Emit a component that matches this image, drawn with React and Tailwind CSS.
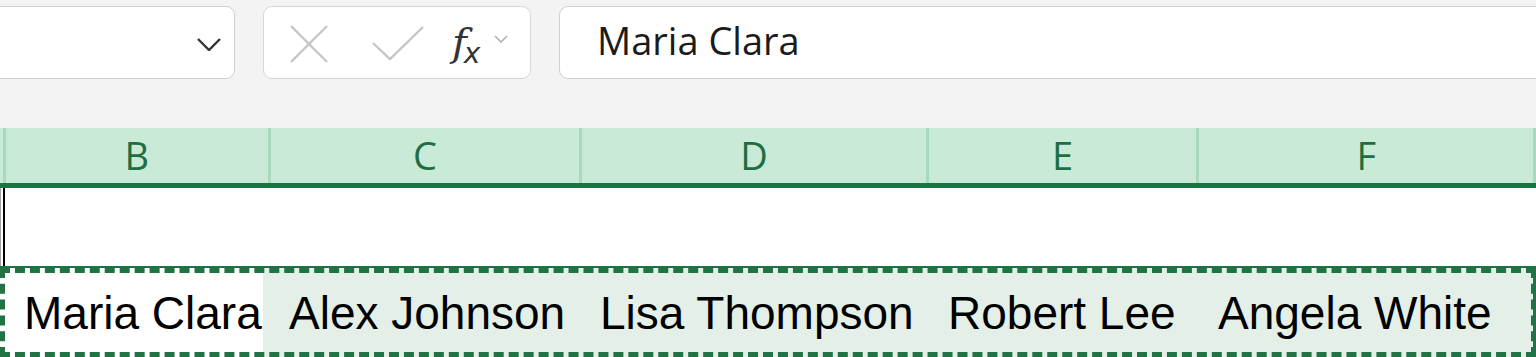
import React from 'react';

// column geometry of the visible sheet (px)
const COLS = [
  { key: 'B', w: 265 },
  { key: 'C', w: 312 },
  { key: 'D', w: 347 },
  { key: 'E', w: 271 },
  { key: 'F', w: 337 },
];

const ROW = ['Maria Clara', 'Alex Johnson', 'Lisa Thompson', 'Robert Lee', 'Angela White'];

function Chevron({ className, w = 24, h = 12, stroke = '#333', sw = 2.4 }) {
  return (
    <svg width={w} height={h} viewBox={`0 0 ${w} ${h}`} className={className}>
      <polyline points={`1,1 ${w / 2},${h - 1} ${w - 1},1`} fill="none" stroke={stroke} strokeWidth={sw} />
    </svg>
  );
}

function Toolbar() {
  return (
    <div className="h-[128px] bg-[#f3f3f3] flex items-start pt-[6px]">
      {/* Name box */}
      <div className="ml-[-20px] w-[255px] h-[73px] bg-white border border-[#d0d0d0] rounded-[9px] flex items-center justify-end pr-[13px]">
        <Chevron w={24} h={13} className="mt-[4px]" />
      </div>

      {/* Cancel / enter / fx */}
      <div className="ml-[28px] w-[268px] h-[73px] bg-white border border-[#d6d6d6] rounded-[9px] flex items-center">
        <svg width="38" height="38" viewBox="0 0 38 38" className="ml-[26px] mt-[3px]">
          <line x1="1" y1="1" x2="37" y2="37" stroke="#c6c6c6" strokeWidth="2.4" />
          <line x1="37" y1="1" x2="1" y2="37" stroke="#c6c6c6" strokeWidth="2.4" />
        </svg>
        <svg width="52" height="36" viewBox="0 0 52 36" className="ml-[44px] mt-[2px]">
          <polyline points="1,17 18,33 51,1" fill="none" stroke="#c6c6c6" strokeWidth="2.4" />
        </svg>
        <span className="ml-[28px] mt-[-2px] text-[#333] italic text-[40px] leading-none [font-family:'DejaVu_Serif',serif]">
          f<span className="text-[28px] italic [font-family:'DejaVu_Sans',sans-serif] relative top-[7px] ml-[-3px]">x</span>
        </span>
        <Chevron w={14} h={8} stroke="#b3b3b3" sw={1.6} className="ml-[14px] mt-[-8px]" />
      </div>

      {/* Formula input */}
      <div className="ml-[28px] flex-1 mr-[-20px] h-[73px] bg-white border border-[#d0d0d0] rounded-[9px] flex items-center pl-[37px] pb-[4px]">
        <span className="text-[38px] text-[#1b1b1b] [font-family:'Open_Sans',sans-serif]">Maria Clara</span>
      </div>
    </div>
  );
}

function HeaderRow() {
  return (
    <div className="h-[55px] bg-[#c9ead7] flex">
      <div className="w-[3px]" />
      {COLS.map((c) => (
        <div
          key={c.key}
          style={{ width: c.w }}
          className="border-l-[3px] border-[#a8d9bb] flex items-center justify-center text-[38px] text-[#1f6e43] [font-family:'Open_Sans',sans-serif]"
        >
          {c.key}
        </div>
      ))}
      <div className="flex-1 border-l-[3px] border-[#a8d9bb]" />
    </div>
  );
}

export default function App() {
  return (
    <div className="w-[1536px] h-[357px] overflow-hidden bg-white">
      <Toolbar />
      <HeaderRow />
      <div className="h-[5px] bg-[#1e7145]" />

      {/* Row 1 */}
      <div className="h-[78px] flex">
        <div className="w-[1px] bg-[#a0a0a0]" />
        <div className="w-[2px]" />
        <div className="w-[2px] bg-black" />
      </div>

      {/* Row 2 – copied range */}
      <div className="relative h-[91px] flex bg-[#e4efe8] border-t-2 border-[#1e7145] text-[46px] text-black [font-family:'Liberation_Sans',Arial,sans-serif]">
        <div className="w-[263px] bg-white flex items-center pl-[24px] pt-[1px]">{ROW[0]}</div>
        <div className="w-[317px] flex items-center pl-[26px] pt-[1px]">{ROW[1]}</div>
        <div className="w-[347px] flex items-center pl-[20px] pt-[1px]">{ROW[2]}</div>
        <div className="w-[271px] flex items-center pl-[21px] pt-[1px]">{ROW[3]}</div>
        <div className="w-[337px] flex items-center pl-[20px] pt-[1px]">{ROW[4]}</div>
        {/* marching ants */}
        <div className="absolute inset-0 border-[5px] border-dashed border-[#217346] pointer-events-none" />
        <div className="absolute top-0 bottom-0 right-0 w-[3px] bg-[#217346]" />
      </div>
    </div>
  );
}
